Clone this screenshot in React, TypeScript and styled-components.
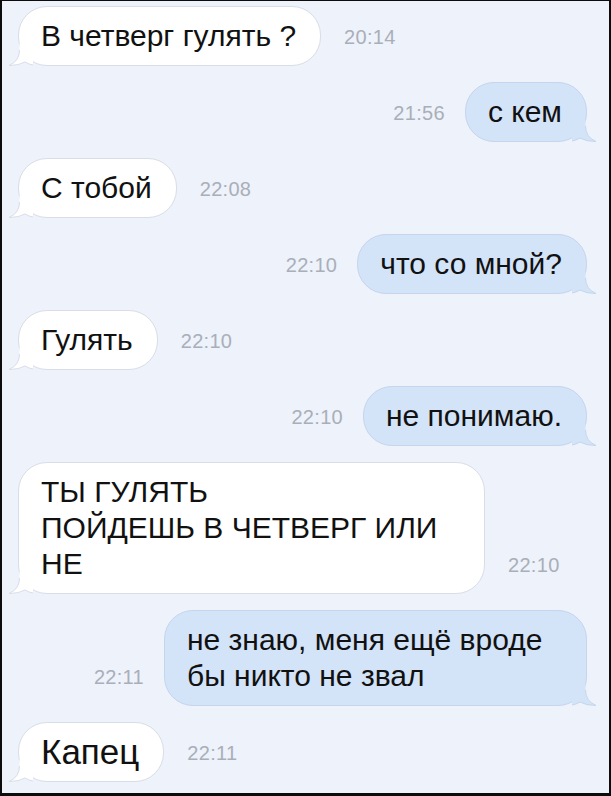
import styled, { createGlobalStyle } from 'styled-components'

const GlobalStyle = createGlobalStyle`
  html, body {
    margin: 0;
    padding: 0;
    background: #0c0c0c;
  }
  * {
    box-sizing: border-box;
  }
`

type Side = 'in' | 'out'

const messages: { side: Side; text: string[]; time: string; width?: number; size?: number }[] = [
  { side: 'in', text: ['В четверг гулять ?'], time: '20:14' },
  { side: 'out', text: ['с кем'], time: '21:56' },
  { side: 'in', text: ['С тобой'], time: '22:08' },
  { side: 'out', text: ['что со мной?'], time: '22:10' },
  { side: 'in', text: ['Гулять'], time: '22:10' },
  { side: 'out', text: ['не понимаю.'], time: '22:10' },
  { side: 'in', text: ['ТЫ ГУЛЯТЬ', 'ПОЙДЕШЬ В ЧЕТВЕРГ ИЛИ', 'НЕ'], time: '22:10', width: 467 },
  { side: 'out', text: ['не знаю, меня ещё вроде', 'бы никто не звал'], time: '22:11', width: 423 },
  { side: 'in', text: ['Капец'], time: '22:11', size: 35 },
]

const Frame = styled.div`
  width: 611px;
  height: 796px;
  border: 2px solid #0c0c0c;
  border-top-width: 1px;
  border-bottom-width: 3px;
  background: #eef2fb;
  padding-top: 5px;
  overflow: hidden;
  font-family: "Liberation Sans", Arial, sans-serif;
`

const Thread = styled.div`
  display: flex;
  flex-direction: column;
  gap: 16px;
`

const Row = styled.div<{ $side: Side }>`
  display: flex;
  flex-direction: ${p => (p.$side === 'in' ? 'row' : 'row-reverse')};
  align-items: flex-end;
  gap: ${p => (p.$side === 'in' ? '23px' : '20px')};
  padding: ${p => (p.$side === 'in' ? '0 0 0 16px' : '0 22px 0 0')};
`

const Bubble = styled.div<{ $side: Side; $width?: number; $size?: number }>`
  position: relative;
  width: ${p => (p.$width ? `${p.$width}px` : 'auto')};
  padding: 11px 24px 11px 22px;
  border-radius: 29px;
  background: ${p => (p.$side === 'in' ? '#ffffff' : '#d3e3f8')};
  border: 1px solid ${p => (p.$side === 'in' ? '#d9dde6' : '#c5d5ec')};
  color: #111;
  font-size: ${p => p.$size ?? 30}px;
  line-height: 36px;
  white-space: nowrap;
`

const Tail = styled.svg<{ $side: Side }>`
  position: absolute;
  bottom: -1px;
  width: 26px;
  height: 22px;
  ${p => (p.$side === 'in' ? 'left: -12px;' : 'right: -12px; transform: scaleX(-1);')}
`

const Time = styled.span`
  font-size: 20px;
  color: #a9afb8;
  padding-bottom: 17px;
  letter-spacing: 0.3px;
`

const BubbleTail = ({ side }: { side: Side }) => {
  const fill = side === 'in' ? '#ffffff' : '#d3e3f8'
  const stroke = side === 'in' ? '#d9dde6' : '#c5d5ec'
  return (
    <Tail $side={side} viewBox="0 0 26 22">
      <path d="M12.5 0 L12.5 8 Q12.5 17 2 21.5 Q12 21.5 18 18 Q22 20.5 30 21.5 L30 0 Z" fill={fill} />
      <path d="M12.5 6 Q12.5 17 2 21.5 Q12 21.5 18 18 Q22 20.5 28 21.5" fill="none" stroke={stroke} strokeWidth="1" />
    </Tail>
  )
}

export default function App() {
  return (
    <>
      <GlobalStyle />
      <Frame>
        <Thread>
          {messages.map((m, i) => (
            <Row key={i} $side={m.side}>
              <Bubble $side={m.side} $width={m.width} $size={m.size}>
                {m.text.map((line, j) => (
                  <div key={j}>{line}</div>
                ))}
                <BubbleTail side={m.side} />
              </Bubble>
              <Time>{m.time}</Time>
            </Row>
          ))}
        </Thread>
      </Frame>
    </>
  )
}
